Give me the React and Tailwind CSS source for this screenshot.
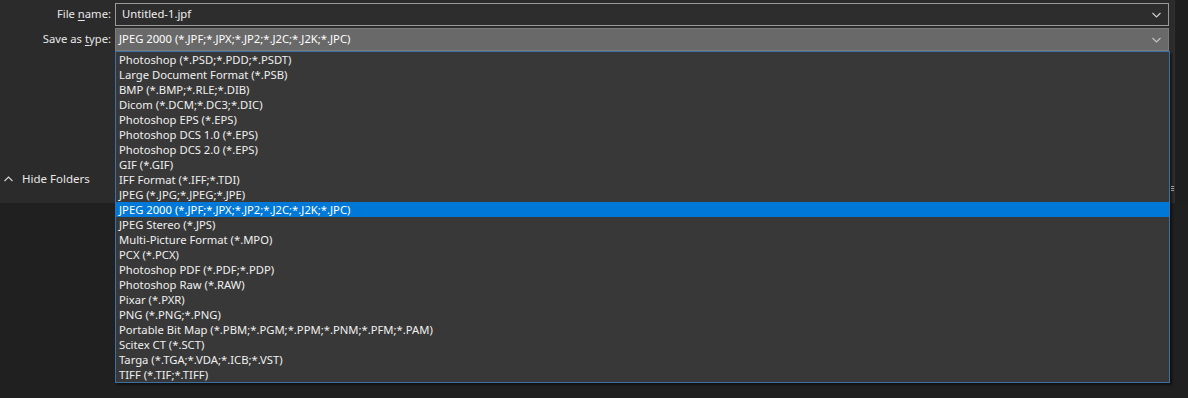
import React from "react";

const types = [
  "Photoshop (*.PSD;*.PDD;*.PSDT)",
  "Large Document Format (*.PSB)",
  "BMP (*.BMP;*.RLE;*.DIB)",
  "Dicom (*.DCM;*.DC3;*.DIC)",
  "Photoshop EPS (*.EPS)",
  "Photoshop DCS 1.0 (*.EPS)",
  "Photoshop DCS 2.0 (*.EPS)",
  "GIF (*.GIF)",
  "IFF Format (*.IFF;*.TDI)",
  "JPEG (*.JPG;*.JPEG;*.JPE)",
  "JPEG 2000 (*.JPF;*.JPX;*.JP2;*.J2C;*.J2K;*.JPC)",
  "JPEG Stereo (*.JPS)",
  "Multi-Picture Format (*.MPO)",
  "PCX (*.PCX)",
  "Photoshop PDF (*.PDF;*.PDP)",
  "Photoshop Raw (*.RAW)",
  "Pixar (*.PXR)",
  "PNG (*.PNG;*.PNG)",
  "Portable Bit Map (*.PBM;*.PGM;*.PPM;*.PNM;*.PFM;*.PAM)",
  "Scitex CT (*.SCT)",
  "Targa (*.TGA;*.VDA;*.ICB;*.VST)",
  "TIFF (*.TIF;*.TIFF)",
];

const selected = "JPEG 2000 (*.JPF;*.JPX;*.JP2;*.J2C;*.J2K;*.JPC)";

const Chevron = ({ up = false, className = "" }) => (
  <svg width="9" height="6" viewBox="0 0 9 6" className={className}>
    <path
      d={up ? "M0.5 5 L4.5 1 L8.5 5" : "M0.5 1 L4.5 5 L8.5 1"}
      fill="none"
      stroke="currentColor"
      strokeWidth="1.1"
    />
  </svg>
);

export default function App() {
  return (
    <div
      className="relative w-[1188px] h-[398px] overflow-hidden bg-[#202020] text-[11.25px] text-[#f0f0f0]"
      style={{ fontFamily: '"Noto Sans", "Open Sans", sans-serif' }}
    >
      <div className="flex">
        <div className="flex-1 h-[203px] bg-[#2b2b2b] pt-[3px] flex flex-col">
          {/* file name row */}
          <div className="flex items-center h-[23px]">
            <div className="w-[111px] text-right text-[#e8e8e8]">
              File <span className="underline underline-offset-2">n</span>ame:
            </div>
            <div className="flex-1 ml-[4px] mr-[5px] h-[23px] border border-[#999999] bg-[#2d2d2d] flex items-center pl-[6px] pr-[4px]">
              <span className="flex-1">Untitled-1.jpf</span>
              <Chevron className="text-[#cfcfcf] mr-[3px]" />
            </div>
          </div>
          {/* save as type row */}
          <div className="flex items-center h-[23px] mt-[2px]">
            <div className="w-[111px] text-right text-[#e8e8e8]">
              Save as <span className="underline underline-offset-2">t</span>ype:
            </div>
            <div className="flex-1 ml-[4px] mr-[5px] h-[23px] border border-[#7c7c7c] bg-[#696969] flex items-center pl-[3px] pr-[4px]">
              <span className="flex-1 text-white">{selected}</span>
              <Chevron className="text-[#c4c4c4] mr-[3px]" />
            </div>
          </div>
          {/* hide folders */}
          <div className="flex items-center mt-[119px] pl-[4px] gap-[9px] text-[#e8e8e8]">
            <Chevron up className="text-[#d8d8d8]" />
            <span className="text-[11.5px]">Hide Folders</span>
          </div>
        </div>
        <div className="w-[14px] h-[203px] bg-[#1e1e1e] border-l border-[#303030]" />
      </div>

      {/* dropdown list */}
      <div className="absolute left-[115px] top-[51px] w-[1055px] border border-[#3d6fa3] bg-[#383838] shadow-[2px_2px_2px_rgba(0,0,0,0.5)]">
        {types.map((t) => (
          <div
            key={t}
            className={
              "h-[15px] leading-[15px] pl-[3px] whitespace-nowrap " +
              (t === selected ? "bg-[#0078d7] text-white" : "text-[#f0f0f0]")
            }
          >
            {t}
          </div>
        ))}
      </div>
      <div className="absolute left-[1171px] top-[186px] flex flex-col gap-[1px]">
        <div className="w-[3px] h-[1px] bg-[#9a9a9a]" />
        <div className="w-[3px] h-[1px] bg-[#9a9a9a]" />
        <div className="w-[3px] h-[1px] bg-[#9a9a9a]" />
      </div>
    </div>
  );
}
